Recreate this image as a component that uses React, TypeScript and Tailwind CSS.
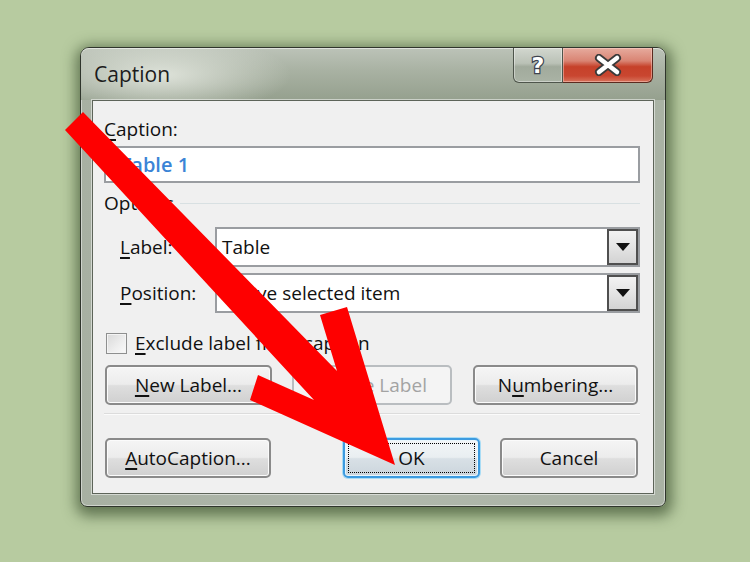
import React from "react";

type BtnProps = {
  children: React.ReactNode;
  className?: string;
  disabled?: boolean;
  focused?: boolean;
};

const U = ({ children }: { children: React.ReactNode }) => (
  <span className="underline decoration-[1.5px] underline-offset-[3px]">{children}</span>
);

const WinButton: React.FC<BtnProps> = ({ children, className = "", disabled, focused }) => {
  const look = disabled
    ? "border-[#b9bdc0] bg-[#f4f4f4] text-[#a3a3a3]"
    : focused
      ? "border-[#3d9be0] bg-[linear-gradient(180deg,#f3f6f8_0%,#e9eef1_48%,#d8e0e6_52%,#cbd5dc_100%)] text-[#111] shadow-[0_0_0_1px_#a9dcf5,inset_0_0_0_1px_#e8f6fd] outline-1 outline-dotted outline-black -outline-offset-[6px]"
      : "border-[#8a8a8a] bg-[linear-gradient(180deg,#f5f5f5_0%,#ececec_48%,#dedede_52%,#d0d0d0_100%)] text-[#111] shadow-[inset_0_0_0_1px_#fbfbfb]";
  return (
    <div
      className={`flex h-[40px] items-center justify-center rounded-[5px] border-2 text-[19px] leading-none ${look} ${className}`}
    >
      {children}
    </div>
  );
};

const DropArrow = () => (
  <div className="flex w-[31px] items-center justify-center self-stretch border-2 border-[#4f4f4f] bg-[linear-gradient(180deg,#f2f2f2_0%,#e4e4e4_50%,#d3d3d3_100%)]">
    <svg width="14" height="8" viewBox="0 0 14 8">
      <polygon points="0,0 14,0 7,8" fill="#111" />
    </svg>
  </div>
);

const Combo = ({ value }: { value: string }) => (
  <div className="flex h-[40px] flex-1 border-2 border-[#9a9da1] bg-white">
    <div className="flex flex-1 items-center pl-[5px] text-[19px] text-[#111]">{value}</div>
    <DropArrow />
  </div>
);

export default function App() {
  return (
    <div className="relative h-[562px] w-[750px] overflow-hidden bg-[#b7cba0] pl-[80px] pt-[47px] font-['Open_Sans',sans-serif]">
      <div className="flex h-[460px] w-[586px] flex-col rounded-t-[9px] rounded-b-[7px] border border-[#2f352c] bg-[linear-gradient(90deg,#a7b0a2_0%,#b0b8ac_50%,#a9b2a4_100%)] shadow-[inset_0_0_0_1px_rgba(255,255,255,0.45),1px_4px_14px_5px_rgba(40,60,30,0.6)]">
        {/* title bar */}
        <div className="flex h-[52px] items-start justify-between rounded-t-[8px] bg-[radial-gradient(ellipse_130px_40px_at_80px_27px,rgba(228,232,224,0.9),rgba(228,232,224,0)),linear-gradient(180deg,#bcc3b8_0%,#a8b1a2_45%,#95a08e_100%)] shadow-[inset_0_1px_0_rgba(255,255,255,0.5)]">
          <div className="pl-[13px] pt-[12px] text-[21px] leading-[28px] text-[#1c1c1c]">Caption</div>
          <div className="mr-[12px] flex h-[35px]">
            <div className="flex w-[50px] items-center justify-center rounded-bl-[6px] border border-t-0 border-[#4e554b] bg-[linear-gradient(180deg,#d2d7cf_0%,#bac1b6_45%,#a1aa9c_55%,#aab3a5_100%)] shadow-[inset_0_0_0_1px_rgba(255,255,255,0.4)]">
              <svg width="24" height="28" viewBox="0 0 24 28">
                <text
                  x="12"
                  y="22"
                  textAnchor="middle"
                  fontFamily="'DejaVu Sans', sans-serif"
                  fontWeight="bold"
                  fontSize="22"
                  fill="#ffffff"
                  stroke="#3d4450"
                  strokeWidth="2.5"
                  paintOrder="stroke"
                >
                  ?
                </text>
              </svg>
            </div>
            <div className="flex w-[90px] items-center justify-center rounded-br-[6px] border border-l-0 border-t-0 border-[#5b2a1f] bg-[linear-gradient(180deg,#e6ab9e_0%,#d98473_38%,#c6412a_55%,#c94630_82%,#d7735c_100%)] shadow-[inset_0_0_0_1px_rgba(255,220,210,0.45)]">
              <svg width="30" height="22" viewBox="0 0 30 22">
                <path d="M6 4 L24 18 M24 4 L6 18" stroke="#3a3a3a" strokeWidth="8" strokeLinecap="round" />
                <path d="M6 4 L24 18 M24 4 L6 18" stroke="#ffffff" strokeWidth="4.5" strokeLinecap="round" />
              </svg>
            </div>
          </div>
        </div>

        {/* client area */}
        <div className="ml-[11px] flex h-[394px] w-[562px] flex-col border border-[#5d6459] bg-[#f0f0f0] pl-[11px] pr-[13px] text-[19px] text-[#111] shadow-[0_0_0_1px_rgba(255,255,255,0.5)]">
          <div className="mt-[15px] h-[26px] leading-[26px]">
            <U>C</U>aption:
          </div>
          <div className="mt-[4px] flex h-[37px] items-center border-2 border-[#9a9da1] bg-white pl-[14px] text-[20px] font-semibold text-[#3b84d6]">
            Table 1
          </div>

          <div className="mt-[7px] flex h-[26px] items-center">
            <span className="leading-[26px]">Options</span>
            <div className="ml-[6px] h-px flex-1 bg-[#d8e0e2]" />
          </div>

          <div className="mt-[11px] flex h-[40px] items-center pl-[16px]">
            <div className="w-[95px]">
              <U>L</U>abel:
            </div>
            <Combo value="Table" />
          </div>
          <div className="mt-[6px] flex h-[40px] items-center pl-[16px]">
            <div className="w-[95px]">
              <U>P</U>osition:
            </div>
            <Combo value="Above selected item" />
          </div>

          <div className="mt-[17px] flex h-[26px] items-center">
            <div className="ml-[2px] h-[21px] w-[21px] border border-[#8e8f8f] bg-[linear-gradient(135deg,#d9d9d9_0%,#eeeeee_60%,#fafafa_100%)] shadow-[inset_0_0_0_1px_#f4f4f4]" />
            <span className="ml-[8px] leading-[26px]">
              <U>E</U>xclude label from caption
            </span>
          </div>

          <div className="mt-[9px] flex">
            <WinButton className="ml-[1px] w-[167px]">
              <U>N</U>ew Label...
            </WinButton>
            <WinButton disabled className="ml-[20px] w-[160px]">
              <U>D</U>elete Label
            </WinButton>
            <WinButton className="ml-[21px] w-[165px]">
              N<U>u</U>mbering...
            </WinButton>
          </div>

          <div className="mt-[8px] h-[2px] border-t border-b border-t-[#dcdcdc] border-b-[#fbfbfb]" />

          <div className="mt-[23px] flex">
            <WinButton className="ml-[1px] w-[166px]">
              <U>A</U>utoCaption...
            </WinButton>
            <WinButton focused className="ml-auto w-[137px]">
              OK
            </WinButton>
            <WinButton className="ml-[20px] mr-[2px] w-[138px]">Cancel</WinButton>
          </div>
        </div>
      </div>

      {/* red pointer arrow drawn over the dialog */}
      <svg className="pointer-events-none absolute left-0 top-0" width="750" height="562" viewBox="0 0 750 562">
        <polygon
          points="83,112 337,371 320,315 347,307 395,465 250,400 258,375 314,400 65,130"
          fill="#fe0000"
        />
      </svg>
    </div>
  );
}
